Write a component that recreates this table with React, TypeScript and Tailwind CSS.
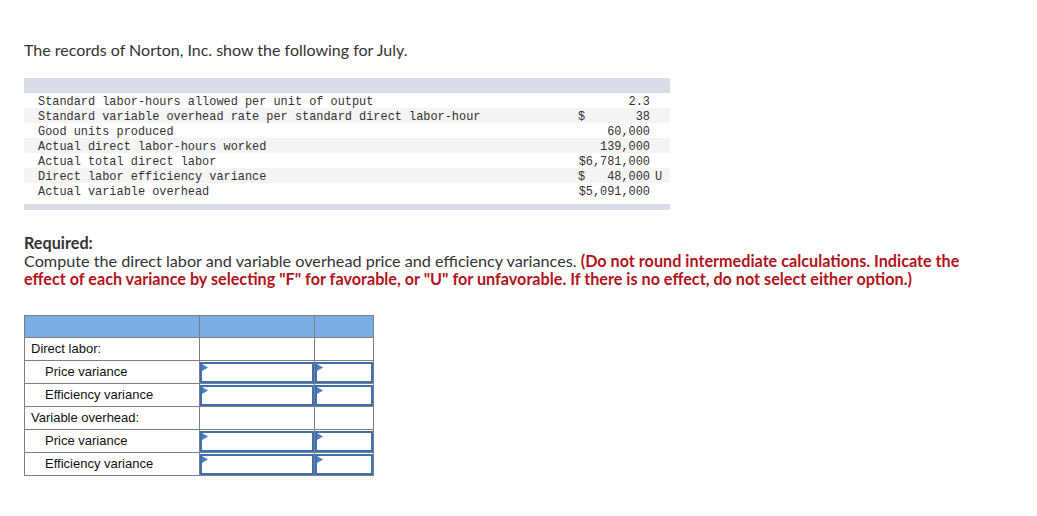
const rows: { label: string; cur?: string; value: string; flag?: string }[] = [
  { label: "Standard labor-hours allowed per unit of output", value: "2.3" },
  { label: "Standard variable overhead rate per standard direct labor-hour", cur: "$", value: "38" },
  { label: "Good units produced", value: "60,000" },
  { label: "Actual direct labor-hours worked", value: "139,000" },
  { label: "Actual total direct labor", value: "$6,781,000" },
  { label: "Direct labor efficiency variance", cur: "$", value: "48,000", flag: "U" },
  { label: "Actual variable overhead", value: "$5,091,000" },
];

const answers: { label: string; head?: boolean }[] = [
  { label: "Direct labor:", head: true },
  { label: "Price variance" },
  { label: "Efficiency variance" },
  { label: "Variable overhead:", head: true },
  { label: "Price variance" },
  { label: "Efficiency variance" },
];

function InputCell() {
  return (
    <td className="border border-[#808080] p-0 h-[23px]">
      <div className="relative h-[21px] border-2 border-[#3d70b2] bg-white">
        <svg className="absolute left-0 top-0" width="7" height="8" viewBox="0 0 7 8">
          <path d="M0 0 L6 3.5 L0 7 Z" fill="#4a7fc1" />
        </svg>
      </div>
    </td>
  );
}

export default function App() {
  return (
    <div className="w-[1037px] h-[516px] bg-white px-6 pt-[41px] text-[#333] font-['Lato',sans-serif]">
      <p className="text-[16px] leading-[18px]">The records of Norton, Inc. show the following for July.</p>

      <div className="mt-[19px] w-[646px] font-['Liberation_Mono',monospace] text-[11.9px] text-[#333]">
        <div className="h-[15px] bg-[#d9dce6]" />
        {rows.map((r, i) => (
          <div key={i} className={`h-[15px] flex items-center leading-[15px] pt-[3px] ${i % 2 === 1 ? "bg-[#f4f4f4]" : "bg-white"}`}>
            <div className="pl-[14px] w-[554px]">{r.label}</div>
            <div className="w-[72px] flex justify-between">
              <span>{r.cur}</span>
              <span>{r.value}</span>
            </div>
            <div className="pl-[5px]">{r.flag}</div>
          </div>
        ))}
        <div className="h-[6px] bg-white" />
        <div className="h-[6px] bg-[#d9dce6]" />
      </div>

      <div className="mt-[24px] text-[16.2px] leading-[18px]">
        <p className="font-bold">Required:</p>
        <p>
          Compute the direct labor and variable overhead price and efficiency variances.{" "}
          <span className="font-bold text-[#b3131b]">
            (Do not round intermediate calculations. Indicate the
            <br />
            effect of each variance by selecting "F" for favorable, or "U" for unfavorable. If there is no effect, do not select either option.)
          </span>
        </p>
      </div>

      <table className="mt-[27px] border-collapse font-['Liberation_Sans',sans-serif] text-[13px] text-[#111]">
        <thead>
          <tr className="h-[22px] bg-[#7aade3]">
            <th className="w-[175px] border border-[#808080]" />
            <th className="w-[115px] border border-[#808080]" />
            <th className="w-[59px] border border-[#808080]" />
          </tr>
        </thead>
        <tbody>
          {answers.map((a, i) =>
            a.head ? (
              <tr key={i} className="h-[23px]">
                <td className="border border-[#808080] pl-[6px]">{a.label}</td>
                <td className="border border-[#808080]" />
                <td className="border border-[#808080]" />
              </tr>
            ) : (
              <tr key={i} className="h-[23px]">
                <td className="border border-[#808080] pl-[20px]">{a.label}</td>
                <InputCell />
                <InputCell />
              </tr>
            )
          )}
        </tbody>
      </table>
    </div>
  );
}
